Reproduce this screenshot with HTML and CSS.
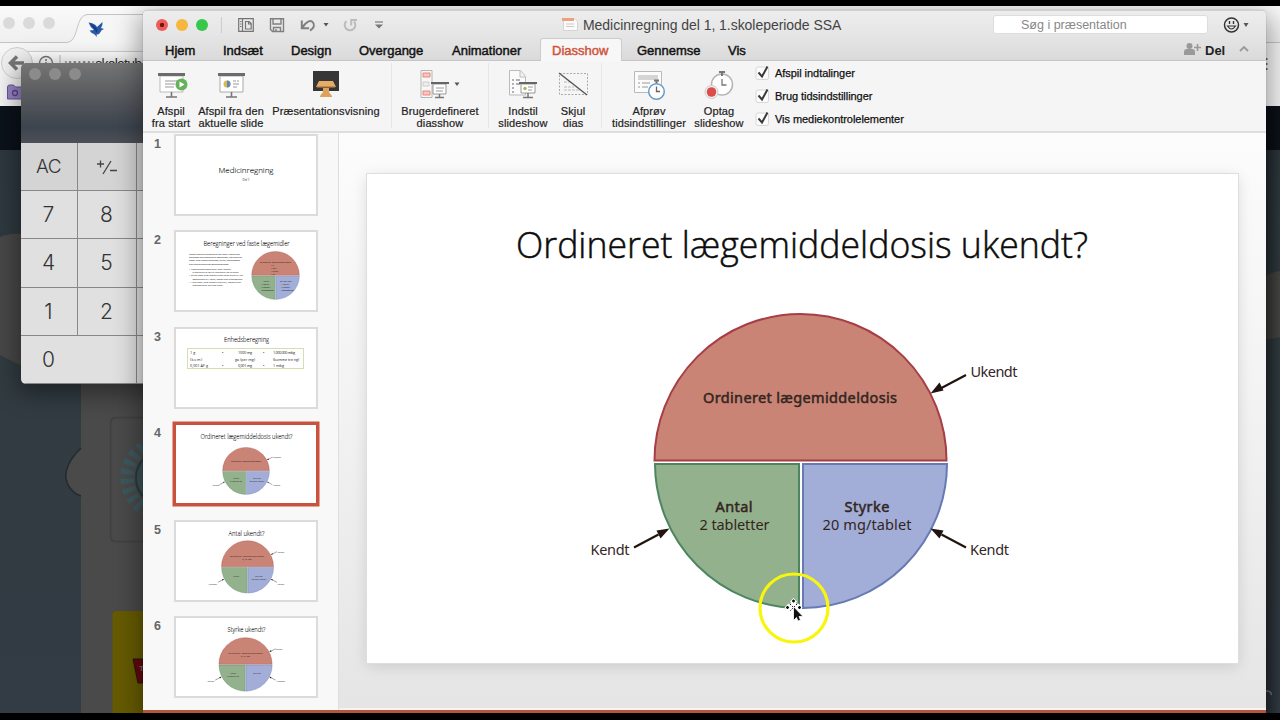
FILE: index.html
```html
<!DOCTYPE html>
<html lang="da">
<head>
<meta charset="utf-8">
<title>Medicinregning del 1, 1.skoleperiode SSA</title>
<link rel="stylesheet" href="styles.css">
</head>
<body>
<main class="desktop">

<!-- Browser behind the other windows -->
<svg class="browser" viewBox="0 0 1280 720" width="1280" height="720">
  <defs>
    <linearGradient id="tabstrip" x1="0" y1="0" x2="0" y2="1"><stop offset="0" stop-color="#fafafa"/><stop offset="1" stop-color="#efefef"/></linearGradient>
    <linearGradient id="page" x1="0" y1="0" x2="0" y2="1"><stop offset="0" stop-color="#2b353d"/><stop offset=".5" stop-color="#313c41"/><stop offset="1" stop-color="#333b44"/></linearGradient>
    <linearGradient id="edge" x1="0" y1="0" x2="1" y2="0"><stop offset="0" stop-color="#000" stop-opacity=".3"/><stop offset="1" stop-color="#000" stop-opacity="0"/></linearGradient>
  </defs>
  <rect y="6" width="1280" height="707" fill="url(#page)"/>
  <rect y="6" width="1280" height="36" fill="url(#tabstrip)"/>
  <rect y="42" width="1280" height="64" fill="#f4f4f4"/>
  <path d="M0 42.500H66C80 42.500 74 15 88 14.500H150V52H0z" fill="#f6f6f6"/>
  <path d="M0 42.500H66C80 42.500 74 15 88 14.500H150M1266 42.500H1280" fill="none" stroke="#c4c4c4"/>
  <circle cx="9" cy="23" r="6" fill="#dadada"/><circle cx="29" cy="23" r="6" fill="#dadada"/><circle cx="49" cy="23" r="6" fill="#dadada"/>
  <path d="M88.500 22.500Q95 23 97 27L102.500 22Q103 25 101 28L104 29Q101 30 100.500 32Q99 35 96.500 34.500L97 37L94 34Q91 33 89.500 30.500L94 30Q90 27 88.500 22.500z" fill="#285aa8"/>
  <path d="M90 23.500Q95 25 97.500 30L97 33Q93 28 90 23.500z" fill="#163b82"/>
  <path d="M20 51.500H150V78H20z" fill="#fff" stroke="#d0d0d0"/>
  <circle cx="17" cy="63" r="15.500" fill="#f0f0f0" stroke="#cfcfcf"/>
  <path d="M24 63H11M17 56.500L10.500 63L17 69.500" fill="none" stroke="#777" stroke-width="3.500"/>
  <circle cx="46" cy="63" r="6.500" fill="none" stroke="#777" stroke-width="1.400"/><path d="M46 59v2M46 62v5" stroke="#777" stroke-width="1.500"/>
  <path d="M60 55v20" stroke="#bbb"/>
  <text x="65" y="69" class="address" textLength="77">www.<tspan class="host">skoletub</tspan></text>
  <path d="M7.500 87q0-2 2-2h4l2 2h8v12h-16z" fill="#9885c6" stroke="#6a579a"/><circle cx="15" cy="93" r="2.500" fill="none" stroke="#59458d" stroke-width="1.300"/>
  <rect y="106" width="1280" height="44" fill="#0b1219"/>
  <path d="M0 237Q10 233 22 234V366L0 355z" fill="#484848"/>
  <path d="M1266 276Q1272 272 1280 271V337Q1274 339 1266 339z" fill="#474645"/>
  <path d="M1266 58h1.500v2h-1.500zM1266 63h1.500v2h-1.500zM1266 68h1.500v2h-1.500z" fill="#666"/>
  <path d="M81 384H143V713H81V496A21 21 0 0 1 67 470Q70 460 81 449z" fill="#4a4a4a"/>
  <path d="M81 496A22 22 0 0 1 66 472Q69 459 81 448" fill="none" stroke="#242c30" stroke-width="1.500"/>
  <path d="M145 417.500H116q-5.500 0-5.500 6V536q0 5.500 5.500 5.500H145" fill="none" stroke="#404040" stroke-width="1.500"/>
  <circle cx="164" cy="478" r="37" fill="none" stroke="#3c595f" stroke-width="13" stroke-dasharray="5 4.200"/>
  <circle cx="164" cy="478" r="28" fill="#3a5357" stroke="#2c393b" stroke-width="2"/>
  <path d="M143 611H116q-3.500 0-3.500 4V713H143z" fill="#665b00"/>
  <path d="M133 659h10v24h-5z" fill="#65080b" stroke="#211813"/>
  <text x="139" y="671" class="poster">T</text>
  <path d="M1266 691q6 0 5 4" fill="none" stroke="#7f8b91" stroke-width="1.500"/>
  <rect x="1266" y="106" width="14" height="607" fill="url(#edge)"/>
  <rect width="1280" height="6"/><rect y="713" width="1280" height="7"/>
</svg>

<section class="calculator">
  <header class="calc-display"><i></i><i></i><i></i></header>
  <div class="keys">
    <span class="fn">AC</span><span class="fn sign"><svg width="24" height="22" viewBox="0 0 24 22"><path d="M2 8h7M5.500 4.500v7M8 18L16 5M15 14.500h7" fill="none" stroke="#444" stroke-width="1.300"/></svg></span><span class="fn"></span>
    <span>7</span><span>8</span><span></span>
    <span>4</span><span>5</span><span></span>
    <span>1</span><span>2</span><span></span>
    <span class="zero"><b>0</b></span><span></span>
  </div>
</section>

<section class="window">
  <header class="titlebar">
    <div class="lights"><i class="close"></i><i class="mini"></i><i class="full"></i></div>
    <div class="quick">
      <svg width="20" height="18" viewBox="0 0 20 18"><path d="M2.700 2.700h14.600v12.600H2.700zM6.500 3v12.500M9.500 5.500h3.700l2 2v5.500H9.500zM12.500 5.500v2.500h2.500" fill="none" stroke="#747474" stroke-width="1.200"/><path d="M4 5.500h1.500M4 8h1.500M4 10.500h1.500" stroke="#777"/></svg>
      <svg width="20" height="18" viewBox="0 0 20 18"><path d="M3.500 2.700h13v12.800h-11l-2-2zM6 3v5h8V3M6.500 15.500v-4h7v4M9 13v2.500" fill="none" stroke="#808080" stroke-width="1.400"/></svg>
      <svg width="20" height="18" viewBox="0 0 20 18"><path d="M3.800 4.500V12.200H11M4.500 11.500C9 4.500 13 4 15 6.500S16 12.500 12 14.500" fill="none" stroke="#808080" stroke-width="2"/></svg>
      <svg class="q-caret" width="8" height="18" viewBox="0 0 8 18"><path d="M1.500 7h5L4 10.500z" fill="#555"/></svg>
      <svg width="20" height="18" viewBox="0 0 20 18"><path d="M6.500 5A5.300 5.300 0 1 0 14 5.500M11.200 9.500V4H17" fill="none" stroke="#bcbcbc" stroke-width="2"/></svg>
      <svg width="16" height="18" viewBox="0 0 16 18"><path d="M4 6h8" stroke="#666" stroke-width="1.200"/><path d="M4 8.500h8L8 12.500z" fill="#777"/></svg>
    </div>
    <div class="doc-title">
      <svg width="17" height="15" viewBox="0 0 17 15"><path d="M1.500 1.500h11l3 3v9h-14z" fill="#fafafa" stroke="#d4d4d4"/><path d="M0 1h12v3H0z" fill="#ee9f7e"/><path d="M4 7h8M4 9.500h8" stroke="#ccc"/></svg>
      <span>Medicinregning del 1, 1.skoleperiode SSA</span>
    </div>
    <div class="search">Søg i præsentation</div>
    <svg class="smile" width="26" height="18" viewBox="0 0 26 18"><circle cx="8.500" cy="9" r="7" fill="none" stroke="#333" stroke-width="1.500"/><path d="M4.500 10q4 6 8 0z" fill="none" stroke="#333" stroke-width="1.200"/><path d="M6.500 5v3M10.500 5v3" stroke="#333" stroke-width="1.400"/><path d="M20.500 7h5L23 11z" fill="#555"/></svg>
  </header>

  <nav class="tabs">
    <div class="tab-list"><span>Hjem</span><span>Indsæt</span><span>Design</span><span>Overgange</span><span>Animationer</span><span class="active">Diasshow</span><span>Gennemse</span><span>Vis</span></div>
    <div class="share">
      <svg width="18" height="14" viewBox="0 0 18 14"><circle cx="5.500" cy="4" r="3" fill="#999"/><path d="M0 13V10q0-3 3-3h5q3 0 3 3v3z" fill="#999"/><path d="M10 5.500h7M13.500 2v7" stroke="#999" stroke-width="1.600"/></svg>
      <b>Del</b>
      <svg class="chev" width="10" height="8" viewBox="0 0 10 8"><path d="M1 6l4-4 4 4" fill="none" stroke="#999" stroke-width="1.800"/></svg>
    </div>
  </nav>

  <div class="ribbon">
    <div class="group g1">
      <div class="cmd c1"><svg viewBox="0 0 36 32"><path d="M7 6h23v16H7z" fill="#fff" stroke="#bbb"/><path d="M5 3h27v3H5z" fill="#6c6c6c"/><path d="M12 11h12M12 14h10M12 17h9" stroke="#999"/><path d="M18.500 22v5M13 27h11" stroke="#777" stroke-width="1.600"/><circle cx="28.500" cy="14.500" r="6" fill="#65b25d"/><path d="M26.500 11.500l5 3-5 3z" fill="#fff"/></svg><p>Afspil<br>fra start</p></div>
      <div class="cmd c2"><svg viewBox="0 0 36 32"><path d="M7 6h23v16H7z" fill="#fff" stroke="#aaa"/><path d="M5 3h27v3H5z" fill="#6c6c6c"/><circle cx="14" cy="14" r="3.500" fill="#dfb84a"/><path d="M14 10.500a3.500 3.500 0 0 1 0 7z" fill="#5c89bd"/><path d="M20 11h3M20 14h6M20 17h4M24 11h2" stroke="#999"/><path d="M18.500 22v5M13 27h11" stroke="#777" stroke-width="1.600"/></svg><p>Afspil fra den<br>aktuelle slide</p></div>
      <div class="cmd c3"><svg viewBox="0 0 36 32"><path d="M5 1h26v20H5z" fill="#363636"/><path d="M11 11h14l3 6H8z" fill="#e5ad67"/><path d="M9 16h18v1.500H9z" fill="#c88d45"/><path d="M15 18h6v4l3 4v1H12v-1l3-4z" fill="#dda35d"/></svg><p>Præsentationsvisning</p></div>
    </div>
    <div class="group g2">
      <div class="cmd c4"><svg class="wide" viewBox="0 0 42 32"><path d="M2 .500h11v27H2z" fill="#f7f7f7" stroke="#b5b5b5"/><path d="M4 3h7v4H4zM4 21h7v4H4z" fill="#f9c5bd" stroke="#e5897e"/><path d="M4 12h6v4H4z" fill="#eee" stroke="#ccc"/><path d="M14 14h13v10H14z" fill="#fff" stroke="#999"/><path d="M12 12h18v2H12z" fill="#666"/><path d="M17 18h8M17 21h7" stroke="#999"/><path d="M20.500 24v3M16 27.500h9" stroke="#777" stroke-width="1.500"/><path d="M35.500 12.500h5L38 16z" fill="#555"/></svg><p>Brugerdefineret<br>diasshow</p></div>
    </div>
    <div class="group g3">
      <div class="cmd c5"><svg viewBox="0 0 36 32"><path d="M4.500.500h11l5 6V25h-16zM15 1v6h5" fill="#fafafa" stroke="#bbb"/><path d="M7 10h2M11 10h4M7 14h2M11 14h4M7 18h2M7 22h2" stroke="#999" stroke-width="1.400"/><path d="M16 14h14v9H16z" fill="#fff" stroke="#999"/><path d="M14 12h18v2H14z" fill="#666"/><circle cx="20" cy="18.500" r="1.700" fill="#a9b755"/><path d="M23 17h5M23 20h4" stroke="#999"/><path d="M23 23v4M18 27.500h10" stroke="#777" stroke-width="1.500"/></svg><p>Indstil<br>slideshow</p></div>
      <div class="cmd c6"><svg viewBox="0 0 36 32"><path d="M4.500 3.500h28v21h-28z" fill="none" stroke="#aaa" stroke-dasharray="2 1.500"/><path d="M9 12h7M9 17h10M9 20h16" stroke="#bbb" stroke-dasharray="3 1"/><path d="M4 3l28 22" stroke="#555" stroke-width="1.400"/></svg><p>Skjul<br>dias</p></div>
    </div>
    <div class="group g4">
      <div class="cmd c7"><svg viewBox="0 0 36 32"><path d="M3.500 1.500h27v21h-27z" fill="#fbfbfb" stroke="#b9b9b9"/><path d="M7 5h20v5H7z" fill="#d5d5d5"/><path d="M7 13h2M11 13h8M7 17h2M11 17h6" stroke="#999"/><path d="M23 10.500h5M25.500 10v4" stroke="#777" stroke-width="2"/><circle cx="25.500" cy="21.500" r="7.800" fill="#fff" stroke="#669cca" stroke-width="1.500"/><path d="M25.500 16.500v5h3.500" fill="none" stroke="#666" stroke-width="1.300"/></svg><p>Afprøv<br>tidsindstillinger</p></div>
      <div class="cmd c8"><svg viewBox="0 0 36 32"><circle cx="21" cy="14.500" r="10.500" fill="#fff" stroke="#b5b5b5" stroke-width="1.500"/><path d="M18 2h6M21 2v4" stroke="#777" stroke-width="2"/><path d="M21 9v6h4.500" fill="none" stroke="#777" stroke-width="1.300"/><circle cx="10.500" cy="22" r="6.500" fill="#f3f3f3" stroke="#ccc"/><circle cx="10.500" cy="22" r="4.800" fill="#da4d4b"/></svg><p>Optag<br>slideshow</p></div>
      <ul class="checks">
        <li><svg viewBox="0 0 16 16"><rect x="1" y="2" width="12.500" height="12.500" rx="2" fill="#fcfcfc" stroke="#d6d6d6"/><path d="M3.500 7.500l3.500 4L12.500 1.500" fill="none" stroke="#3a3a3a" stroke-width="2"/></svg>Afspil indtalinger</li>
        <li><svg viewBox="0 0 16 16"><rect x="1" y="2" width="12.500" height="12.500" rx="2" fill="#fcfcfc" stroke="#d6d6d6"/><path d="M3.500 7.500l3.500 4L12.500 1.500" fill="none" stroke="#3a3a3a" stroke-width="2"/></svg>Brug tidsindstillinger</li>
        <li><svg viewBox="0 0 16 16"><rect x="1" y="2" width="12.500" height="12.500" rx="2" fill="#fcfcfc" stroke="#d6d6d6"/><path d="M3.500 7.500l3.500 4L12.500 1.500" fill="none" stroke="#3a3a3a" stroke-width="2"/></svg>Vis mediekontrolelementer</li>
      </ul>
    </div>
  </div>

  <div class="work">
    <ol class="thumbs">
      <li><b>1</b><div class="thumb"><svg viewBox="0 0 144 82"><text x="72" y="39" class="mini-title" textLength="55" lengthAdjust="spacingAndGlyphs">Medicinregning</text><text x="72" y="47" class="micro" textLength="7">Del 1</text></svg></div></li>
      <li><b>2</b><div class="thumb"><svg viewBox="0 0 144 82"><text x="72.500" y="15.500" class="mini-title" textLength="86" lengthAdjust="spacingAndGlyphs">Beregninger ved faste lægemidler</text>
        <g class="tiny"><text x="15" y="25" textLength="51">Denne enhed er enheden på en tablet. Tages flere</text><text x="15" y="28.200" textLength="53">anvendes ved beregning af lægemidler, når man har</text><text x="15" y="31.400" textLength="51">Dosis, hvor enhed anvendes, styrke, enhedsdosis</text><text x="15" y="34.600" textLength="40">eller med ordinerede lægemiddeldosis.</text><text x="15" y="40" textLength="42">•  Lægemiddeldosis siger hvor mange</text><text x="18.500" y="43.200" textLength="46">g/mg/mikg/IE der er ordineret ad en gang</text><text x="15" y="46.400" textLength="54">•  Styrke siger hvor mange g/mg/mikg/IE der er i en</text><text x="18.500" y="49.600" textLength="50">lægemiddel er i tablet, kapsel eller suppositorie</text><text x="15" y="53" textLength="52">•  Antal siger, hvor mange tabletter, kapsler eller</text><text x="18.500" y="56.200" textLength="30">suppositorier der skal gives</text></g>
        <g transform="translate(101.500 45.500) scale(.163)"><use href="#pie"/></g>
        <g class="tiny"><text x="86" y="32.500" textLength="31">Ordineret lægemiddeldosis</text><text x="97" y="36">• g</text><text x="97" y="39">• mg</text><text x="97" y="42">• mikg</text><text x="97" y="45">• IE</text><text x="89" y="52">Antal</text><text x="87" y="55">• tablet</text><text x="87" y="58">• kapsel</text><text x="87" y="61" textLength="13">• suppositorie</text><text x="106" y="52">Styrke per</text><text x="107" y="55">• tablet</text><text x="107" y="58">• kapsel</text><text x="107" y="61" textLength="13">• suppositorie</text></g></svg></div></li>
      <li><b>3</b><div class="thumb"><svg viewBox="0 0 144 82"><text x="72.500" y="15" class="mini-title" textLength="45" lengthAdjust="spacingAndGlyphs">Enhedsberegning</text><rect x="13.500" y="21.500" width="116" height="20" fill="#fff" stroke="#d3dfae"/>
        <g class="cell"><text x="16" y="27">1 g</text><text x="48" y="27">•</text><text x="64" y="27" textLength="14">1000 mg</text><text x="89" y="27">•</text><text x="99" y="27" textLength="22">1.000.000 mikg</text><text x="16" y="34" textLength="12">(kom)</text><text x="61" y="34" textLength="20">gå (per mg)</text><text x="99" y="34" textLength="26">(komme tre ng)</text><text x="16" y="40.300" textLength="18">0,001 AF g</text><text x="48" y="40">•</text><text x="64" y="40.300" textLength="14">0,001 mg</text><text x="89" y="40">•</text><text x="99" y="40.300" textLength="11">1 mikg</text></g></svg></div></li>
      <li><b>4</b><div class="thumb selected"><svg viewBox="0 0 144 82"><text x="72.500" y="15.500" class="mini-title" textLength="92" lengthAdjust="spacingAndGlyphs">Ordineret lægemiddeldosis ukendt?</text><g transform="translate(72 48) scale(.16)"><use href="#pie"/><use href="#arrows"/></g>
        <g class="tiny mid"><text x="72" y="38.500" textLength="30">Ordineret lægemiddeldosis</text><text x="62" y="55.500">Antal</text><text x="62" y="58.500">2 tabletter</text><text x="83" y="55.500">Styrke</text><text x="83" y="58.500">20 mg/tablet</text><text x="103" y="35">Ukendt</text><text x="42" y="63">Kendt</text><text x="103" y="63">Kendt</text></g></svg></div></li>
      <li><b>5</b><div class="thumb"><svg viewBox="0 0 144 82"><text x="72.500" y="15.500" class="mini-title" textLength="36" lengthAdjust="spacingAndGlyphs">Antal ukendt?</text><g transform="translate(73.500 47) scale(.178)"><use href="#pie"/><use href="#arrows"/></g>
        <g class="tiny mid"><text x="73" y="36.500" textLength="34">Ordineret lægemiddeldosis</text><text x="73" y="40">0,15 mg</text><text x="62" y="56.500">Antal</text><text x="85" y="56.500">Styrke</text><text x="85" y="59.500">20 mg/tablet</text><text x="107" y="33">Kendt</text><text x="39" y="64.500">Ukendt</text><text x="107" y="64.500">Kendt</text></g></svg></div></li>
      <li><b>6</b><div class="thumb"><svg viewBox="0 0 144 82"><text x="72.500" y="15.500" class="mini-title" textLength="38" lengthAdjust="spacingAndGlyphs">Styrke ukendt?</text><g transform="translate(71.500 48.500) scale(.182)"><use href="#pie"/><use href="#arrows"/></g>
        <g class="tiny mid"><text x="71.500" y="37.500" textLength="34">Ordineret lægemiddeldosis</text><text x="71.500" y="41">0,15 mg</text><text x="59" y="58">Antal</text><text x="59" y="61">2 tabletter</text><text x="83" y="58">Styrke</text><text x="105" y="33.500">Kendt</text><text x="37" y="66">Kendt</text><text x="107" y="66">Ukendt</text></g></svg></div></li>
    </ol>

    <div class="stage">
      <svg class="slide" viewBox="367 174 871 489" width="871" height="489">
        <defs>
          <g id="pie" stroke-width="2">
            <path d="M-146 -1A146 146.500 0 0 1 146 -1z" fill="#c98476" stroke="#a63f45"/>
            <path d="M-1.500 2.500H-145.500A145 144.500 0 0 0 -1.500 146.500z" fill="#93b18c" stroke="#4c8560"/>
            <path d="M2.500 2.500H146.500A145 144.500 0 0 1 2.500 146.500z" fill="#a2aed7" stroke="#667bb3"/>
          </g>
          <g id="arrows" fill="#21140f">
            <path d="M165.500 -86.500L140 -73" stroke="#21140f" stroke-width="2.200"/><path d="M130 -68l9-11 4 8z"/>
            <path d="M165.500 86L141 73" stroke="#21140f" stroke-width="2.200"/><path d="M130 67l13 2-4 8z"/>
            <path d="M-166.500 86L-142 73" stroke="#21140f" stroke-width="2.200"/><path d="M-131 67l-13 2 4 8z"/>
          </g>
        </defs>
        <text x="516" y="258" class="slide-title" textLength="572" lengthAdjust="spacingAndGlyphs">Ordineret lægemiddeldosis ukendt?</text>
        <g transform="translate(800.500 461.500)"><use href="#pie"/><use href="#arrows"/></g>
        <g class="pie-text">
          <text x="800" y="403" class="strong" textLength="194">Ordineret lægemiddeldosis</text>
          <text x="734" y="512" class="strong" textLength="37">Antal</text><text x="734.500" y="530" textLength="70">2 tabletter</text>
          <text x="867" y="512" class="strong" textLength="45">Styrke</text><text x="867" y="530" textLength="89">20 mg/tablet</text>
          <text x="994" y="377" textLength="47">Ukendt</text><text x="610" y="555" textLength="39">Kendt</text><text x="989.500" y="555" textLength="39">Kendt</text>
        </g>
        <circle cx="794" cy="608" r="34" fill="none" stroke="#f8f50e" stroke-width="3.200"/>
        <path d="M784.500 607.500l4-4 1.500 1 1-2-1-1 3.500-3.500 3.500 3.500-1 1 1 2 1.500-1 4 4-4 4-1.500-1-1 2 1 1-3.500 3.500-3.500-3.500 1-1-1-2-1.500 1z" fill="#fff"/>
        <path d="M793.500 599.500v3M786 607.500h3M798 607.500h3M792 601h3M787.500 606v3M799.500 606v3" stroke="#111" stroke-width="1.300"/>
        <path d="M790 604l7 7M797 604l-7 7" stroke="#111" stroke-dasharray="1.500 1.500"/>
        <path d="M793.500 606.500v14l3-3 1.500 3.500 2.500-1-1.500-3.500h4z" fill="#111" stroke="#fff" stroke-width=".8"/>
      </svg>
    </div>
  </div>
  <footer class="status"></footer>
</section>
</main>
</body>
</html>
```
FILE: styles.css
```css
* { box-sizing: border-box; }
body { margin: 0; background: #000; font-family: "Liberation Sans", Arial, sans-serif; color: #222; }
.desktop { position: relative; width: 1280px; height: 720px; overflow: hidden; }
.browser { position: absolute; left: 0; top: 0; }
.address { font: 14px "Liberation Sans", sans-serif; fill: #888; }
.host { fill: #333; }
.poster { font: bold 8px "Liberation Sans", sans-serif; fill: #766; }
svg text { white-space: pre; }

/* Calculator */
.calculator { position: absolute; left: 21px; top: 63px; width: 172px; height: 321px; border-radius: 5px; overflow: hidden; box-shadow: 0 6px 24px 4px rgba(0,0,0,.4); }
.calc-display { height: 80px; padding: 5px 8px; display: flex; gap: 8px; background: linear-gradient(#757575, #5c5e61 35%, #3d444e 80%, #4c5057); }
.calc-display i { width: 12px; height: 12px; border-radius: 50%; background: #8b8b8b; }
.keys { display: grid; grid-template-columns: 57px 59px 56px; grid-template-rows: repeat(5, 48.2px); }
.keys span { background: #e0e0e0; border-right: 1px solid #888; border-bottom: 1px solid #888; display: flex; align-items: center; justify-content: center; font-family: Inter, "Liberation Sans", sans-serif; font-size: 21px; color: #333; font-weight: 300; padding-right: 1px; }
.keys .fn { background: #d4d4d4; font-size: 19px; letter-spacing: -.03em; }
.keys .zero { grid-column: span 2; justify-content: flex-start; padding-left: 21px; }
.zero b { font-weight: 300; }

/* Presentation window */
.window { position: absolute; left: 143px; top: 10px; width: 1123px; height: 703px; border-radius: 5px 5px 0 0; display: flex; flex-direction: column; background: #f8f8f8; box-shadow: 0 8px 26px 4px rgba(0,0,0,.36), 0 0 1px rgba(0,0,0,.5); overflow: hidden; }
.titlebar { height: 28px; flex: none; display: flex; align-items: center; background: linear-gradient(#ededed, #e4e4e4); border-top: 1px solid #d0d0d0; }
.lights { display: flex; gap: 8px; margin-left: 13px; padding-right: 13px; border-right: 1px solid #ccc; height: 16px; align-items: center; }
.lights i { width: 12px; height: 12px; border-radius: 50%; }
.close { background: radial-gradient(circle, #6d1512 0 1.800px, #ee5c58 2.600px); }
.mini { background: #f6b73c; }
.full { background: #37c84b; }
.quick { display: flex; gap: 11px; margin-left: 14px; }
.q-caret { margin-left: -7px; margin-right: -1px; }
.doc-title { margin-left: 175px; width: 284px; display: flex; align-items: center; gap: 4px; font-size: 14px; color: #444; white-space: nowrap; }
.doc-title span { letter-spacing: -.04px; }
.search { margin-left: 147px; width: 215px; height: 19px; background: #fff; border: 1px solid #ddd; border-radius: 3px; padding-left: 27px; font-size: 12.500px; line-height: 18px; color: #888; white-space: nowrap; }
.smile { margin-left: 15px; }
.tabs { height: 23px; flex: none; display: flex; justify-content: space-between; background: linear-gradient(#e4e4e4, #dadada); border-bottom: 1px solid #c6c6c6; }
.tab-list { display: grid; grid-template-columns: 58px 68px 68px 93px 99px 86px 91px 30px; margin-left: 22px; height: 23px; font-size: 13px; line-height: 25px; color: #111; -webkit-text-stroke: .45px currentColor; }
.active { margin-left: -11px; width: 82px; padding-left: 11px; background: #f7f7f7; border: 1px solid #ccc; border-bottom: 0; border-radius: 3px 3px 0 0; line-height: 23px; color: #d0523a; }
.share { display: flex; align-items: center; width: 82px; font-size: 13px; }
.share b { margin-left: 3px; margin-top: 3px; }
.chev { margin-left: 14px; }

.ribbon { height: 72px; flex: none; display: flex; background: #f5f5f5; border-bottom: 2px solid #dedede; }
.group { display: flex; flex: none; margin-top: 2px; }
.g1, .g2, .g3 { border-right: 1px solid #e6e6e6; height: 65px; }
.g1 { width: 249px; padding-left: 6px; }
.g2 { width: 97px; padding-left: 8px; }
.g3 { width: 113px; padding-left: 8px; }
.g4 { padding-left: 7px; }
.cmd { display: flex; flex-direction: column; align-items: center; padding-top: 7px; flex: none; }
.cmd svg { width: 36px; height: 32px; flex: none; }
.cmd .wide { width: 42px; }
.cmd p { margin: 3px 0 0; font-size: 11px; line-height: 12px; text-align: center; white-space: nowrap; color: #222; -webkit-text-stroke: .2px #222; letter-spacing: .01em; }
.c1 { width: 44px; }
.c2 { width: 70px; margin-left: 3px; }
.c3 { width: 112px; margin-left: 4px; }
.c4 { width: 80px; }
.c5 { width: 52px; }
.c6 { width: 36px; margin-left: 6px; }
.c7 { width: 80px; }
.c8 { width: 54px; margin-left: 3px; }
.checks { list-style: none; margin: -2px 0 0 9px; padding: 0; font-size: 11px; letter-spacing: -.05px; color: #111; -webkit-text-stroke: .25px #111; }
.checks li { height: 23px; display: flex; align-items: center; gap: 4px; }
.checks svg { width: 16px; height: 16px; }

.work { flex: 1; min-height: 0; display: flex; }
.thumbs { width: 196px; margin: 0; padding: 1px 0 0; list-style: none; border-right: 1px solid #dedede; background: #f8f8f8; }
.thumbs li { height: 96.400px; display: flex; }
.thumbs b { width: 31px; padding: 3px 0 0 11px; font-size: 12.500px; line-height: 14px; color: #666; }
.thumb { width: 144px; height: 82px; background: #fff; box-shadow: inset 0 0 0 2px #dbdbdb; }
.thumb svg { display: block; width: 144px; height: 82px; overflow: visible; }
.selected { box-shadow: 0 0 0 1.500px #c9523d, inset 0 0 0 2px #c9523d; }
.mini-title { font: 300 7.600px "Open Sans", sans-serif; fill: #222; stroke: #222; stroke-width: .1px; text-anchor: middle; }
.micro { font: 3.200px "Open Sans", sans-serif; text-anchor: middle; fill: #333; }
.tiny { font: 2.500px "Open Sans", sans-serif; fill: #222; }
.mid text { text-anchor: middle; }
.cell { font: 3.800px "Open Sans", sans-serif; fill: #222; }

.stage { flex: 1; padding: 41px 0 0 28px; background: linear-gradient(#fcfcfc, #f3f3f3 45%, #e5e5e5); border-bottom: 2px solid #f9f3f0; margin-left: -4px; padding-left: 28px; }
.stage { margin-left: 0; padding-left: 28px; }
.slide { display: block; background: #fff; box-shadow: 0 0 0 1px #dedede, 0 3px 14px rgba(0,0,0,.13); }
.slide-title { font: 300 37px "Open Sans", sans-serif; fill: #0c0c0c; stroke: #0c0c0c; stroke-width: .5px; }
.pie-text { font: 14.500px "Noto Sans", sans-serif; fill: #33251f; text-anchor: middle; }
.pie-text .strong { stroke: #33251f; stroke-width: .5px; }
.status { height: 3px; flex: none; background: #b4553f; }
```
